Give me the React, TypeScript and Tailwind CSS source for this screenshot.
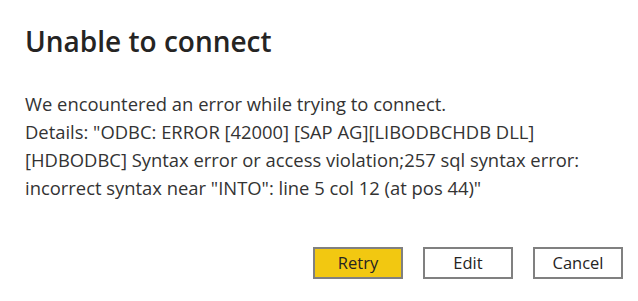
import React from 'react';

const font = { fontFamily: '"Segoe UI", "Open Sans", "Noto Sans", sans-serif' };

export default function App() {
  return (
    <div className="w-[638px] h-[301px] bg-white text-[#252423] overflow-hidden" style={font}>
      <div className="pl-[25px] pr-4 pt-[22px]">
        <h1 className="text-[28px] leading-[38px] font-semibold">Unable to connect</h1>
        <div className="mt-[30px] text-[18.4px] leading-[28px] text-[#333]">
          <p>We encountered an error while trying to connect.</p>
          <p>
            Details: "ODBC: ERROR [42000] [SAP AG][LIBODBCHDB DLL] [HDBODBC] Syntax error or access
            violation;257 sql syntax error: incorrect syntax near "INTO": line 5 col 12 (at pos 44)"
          </p>
        </div>
      </div>
      <div className="flex justify-end gap-5 pr-[15px] mt-[45px]">
        <button className="w-[90px] h-8 border-2 border-[#808080] bg-[#f2c811] text-[16.5px] text-[#252423]">Retry</button>
        <button className="w-[90px] h-8 border-2 border-[#808080] bg-white text-[16.5px] text-[#252423]">Edit</button>
        <button className="w-[90px] h-8 border-2 border-[#808080] bg-white text-[16.5px] text-[#252423]">Cancel</button>
      </div>
    </div>
  );
}
